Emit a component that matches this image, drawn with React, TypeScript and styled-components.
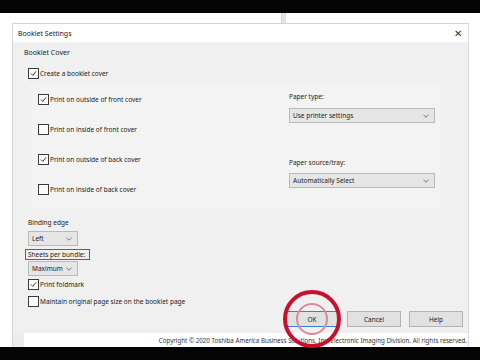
import React from 'react';
import styled, { createGlobalStyle } from 'styled-components';

const GlobalStyle = createGlobalStyle`
  html, body {
    margin: 0;
    padding: 0;
    background: #ffffff;
  }
  body {
    font-family: 'Noto Sans', 'Open Sans', Arial, sans-serif;
    color: #1e1e1e;
  }
`;

const Screen = styled.div`
  width: 480px;
  height: 360px;
  display: flex;
  flex-direction: column;
  overflow: hidden;
  background: #ffffff;
`;

const BlackBar = styled.div<{ $h: number }>`
  height: ${(p) => p.$h}px;
  background: #050505;
  flex-shrink: 0;
`;

const Backdrop = styled.div`
  height: 10px;
  flex-shrink: 0;
  padding-left: 281px;
  display: flex;
`;

const WindowEdge = styled.div`
  width: 4px;
  background: #e4e4e4;
  border-left: 1px solid #d6d6d6;
`;

const Dialog = styled.div`
  margin-left: 12px;
  width: 457px;
  flex: 1;
  min-height: 0;
  display: flex;
  flex-direction: column;
  border: 1px solid #d4d4d4;
  border-bottom: none;
  border-right: 1px solid #dadada;
  box-sizing: border-box;
`;

const TitleBar = styled.div`
  height: 18px;
  flex-shrink: 0;
  display: flex;
  align-items: center;
  justify-content: space-between;
  padding: 0 6px 0 5px;
  background: #ffffff;
  font-size: 7px;
  color: #1a1a1a;
`;

const CloseBtn = styled.span`
  font-size: 10px;
  color: #333;
  line-height: 1;
`;

const Body = styled.div`
  flex: 1;
  min-height: 0;
  background: #f0f0f0;
  display: flex;
  flex-direction: column;
  padding: 0 0 0 11px;
  font-size: 6.5px;
  color: #222;
`;

const GroupTitle = styled.div`
  height: 20px;
  flex-shrink: 0;
  display: flex;
  align-items: center;
  font-size: 7px;
`;

const Row = styled.label<{ $h?: number; $indent?: number }>`
  height: ${(p) => p.$h ?? 16}px;
  flex-shrink: 0;
  display: flex;
  align-items: center;
  gap: 1px;
  padding-left: ${(p) => p.$indent ?? 0}px;
`;

const Box = styled.span`
  width: 9px;
  height: 9px;
  border: 1px solid #3a3a3a;
  background: #fafafa;
  display: inline-flex;
  align-items: center;
  justify-content: center;
  flex-shrink: 0;
`;

const Panel = styled.div`
  margin: 0 28px 0 7px;
  padding: 0 0 4px 0;
  flex-shrink: 0;
  background: #f3f3f3;
  display: grid;
  grid-template-columns: 1fr 151px;
`;

const LeftCol = styled.div`
  display: flex;
  flex-direction: column;
`;

const RightCol = styled.div`
  display: flex;
  flex-direction: column;
  padding-top: 8px;
`;

const FieldLabel = styled.div<{ $mt?: number }>`
  height: 10px;
  line-height: 10px;
  flex-shrink: 0;
  margin-top: ${(p) => p.$mt ?? 0}px;
`;

const Select = styled.div<{ $w: number; $mt?: number }>`
  width: ${(p) => p.$w}px;
  height: 15px;
  flex-shrink: 0;
  margin-top: ${(p) => p.$mt ?? 0}px;
  box-sizing: border-box;
  border: 1px solid #b9b9b9;
  background: #e6e6e6;
  display: flex;
  align-items: center;
  justify-content: space-between;
  padding: 0 5px 0 3px;
  font-size: 6.5px;
`;

const Lower = styled.div`
  display: flex;
  flex-direction: column;
  padding-left: 4px;
  margin-top: 10px;
`;

const Marked = styled.div`
  margin: 3px 0 0 -3px;
  width: 65px;
  height: 11px;
  flex-shrink: 0;
  box-sizing: border-box;
  border: 1px solid #c8343c;
  display: flex;
  align-items: center;
  padding-left: 2px;
`;

const Buttons = styled.div`
  margin-top: auto;
  margin-bottom: 6px;
  display: flex;
  justify-content: flex-end;
  gap: 8px;
  padding-right: 5px;
`;

const Btn = styled.div<{ $focus?: boolean }>`
  width: 54px;
  height: 16px;
  box-sizing: border-box;
  border: 1px solid ${(p) => (p.$focus ? '#3f7fd0' : '#b3b3b3')};
  background: #e1e1e1;
  display: flex;
  align-items: center;
  justify-content: center;
  font-size: 6.5px;
  position: relative;
`;

const Circle = styled.svg`
  position: absolute;
  left: 50%;
  top: 50%;
  width: 62px;
  height: 62px;
  margin: -31px 0 0 -31px;
  pointer-events: none;
`;

const Footer = styled.div`
  height: 14px;
  flex-shrink: 0;
  display: flex;
  align-items: center;
  justify-content: flex-end;
  background: #ffffff;
  border-left: 11px solid #ececec;
  font-size: 6.2px;
  color: #333;
  padding-right: 1px;
`;

const Chevron = () => (
  <svg width="6" height="4" viewBox="0 0 6 4">
    <path d="M0.5 0.8 L3 3.2 L5.5 0.8" fill="none" stroke="#555" strokeWidth="0.8" />
  </svg>
);

const Check = ({ on }: { on: boolean }) => (
  <Box>
    {on && (
      <svg width="7" height="7" viewBox="0 0 7 7">
        <path d="M1 3.6 L2.8 5.4 L6 1.4" fill="none" stroke="#222" strokeWidth="0.9" />
      </svg>
    )}
  </Box>
);

const coverOptions = [
  { text: 'Print on outside of front cover', on: true },
  { text: 'Print on inside of front cover', on: false },
  { text: 'Print on outside of back cover', on: true },
  { text: 'Print on inside of back cover', on: false },
];

export default function App() {
  return (
    <Screen>
      <GlobalStyle />
      <BlackBar $h={13} />
      <Backdrop>
        <WindowEdge />
      </Backdrop>
      <Dialog>
        <TitleBar>
          <span>Booklet Settings</span>
          <CloseBtn>✕</CloseBtn>
        </TitleBar>
        <Body>
          <GroupTitle>Booklet Cover</GroupTitle>
          <Row $h={22} $indent={4}>
            <Check on />
            Create a booklet cover
          </Row>
          <Panel>
            <LeftCol>
              {coverOptions.map((o) => (
                <Row key={o.text} $h={30} $indent={7}>
                  <Check on={o.on} />
                  {o.text}
                </Row>
              ))}
            </LeftCol>
            <RightCol>
              <FieldLabel>Paper type:</FieldLabel>
              <Select $w={146} $mt={6}>
                Use printer settings
                <Chevron />
              </Select>
              <FieldLabel $mt={35}>Paper source/tray:</FieldLabel>
              <Select $w={146} $mt={5}>
                Automatically Select
                <Chevron />
              </Select>
            </RightCol>
          </Panel>
          <Lower>
            <FieldLabel>Binding edge</FieldLabel>
            <Select $w={50} $mt={3}>
              Left
              <Chevron />
            </Select>
            <Marked>Sheets per bundle:</Marked>
            <Select $w={50} $mt={1}>
              Maximum
              <Chevron />
            </Select>
            <Row $h={17}>
              <Check on />
              Print foldmark
            </Row>
            <Row $h={17}>
              <Check on={false} />
              Maintain original page size on the booklet page
            </Row>
          </Lower>
          <Buttons>
            <Btn $focus>
              OK
              <Circle viewBox="0 0 62 62">
                <circle cx="31" cy="31" r="27" fill="none" stroke="#c8102e" strokeWidth="4" />
                <circle cx="31" cy="31" r="15" fill="none" stroke="#d98a98" strokeWidth="2" />
              </Circle>
            </Btn>
            <Btn>Cancel</Btn>
            <Btn>Help</Btn>
          </Buttons>
        </Body>
        <Footer>
          Copyright © 2020 Toshiba America Business Solutions, Inc. Electronic Imaging Division. All rights reserved.
        </Footer>
      </Dialog>
      <BlackBar $h={13} />
    </Screen>
  );
}
